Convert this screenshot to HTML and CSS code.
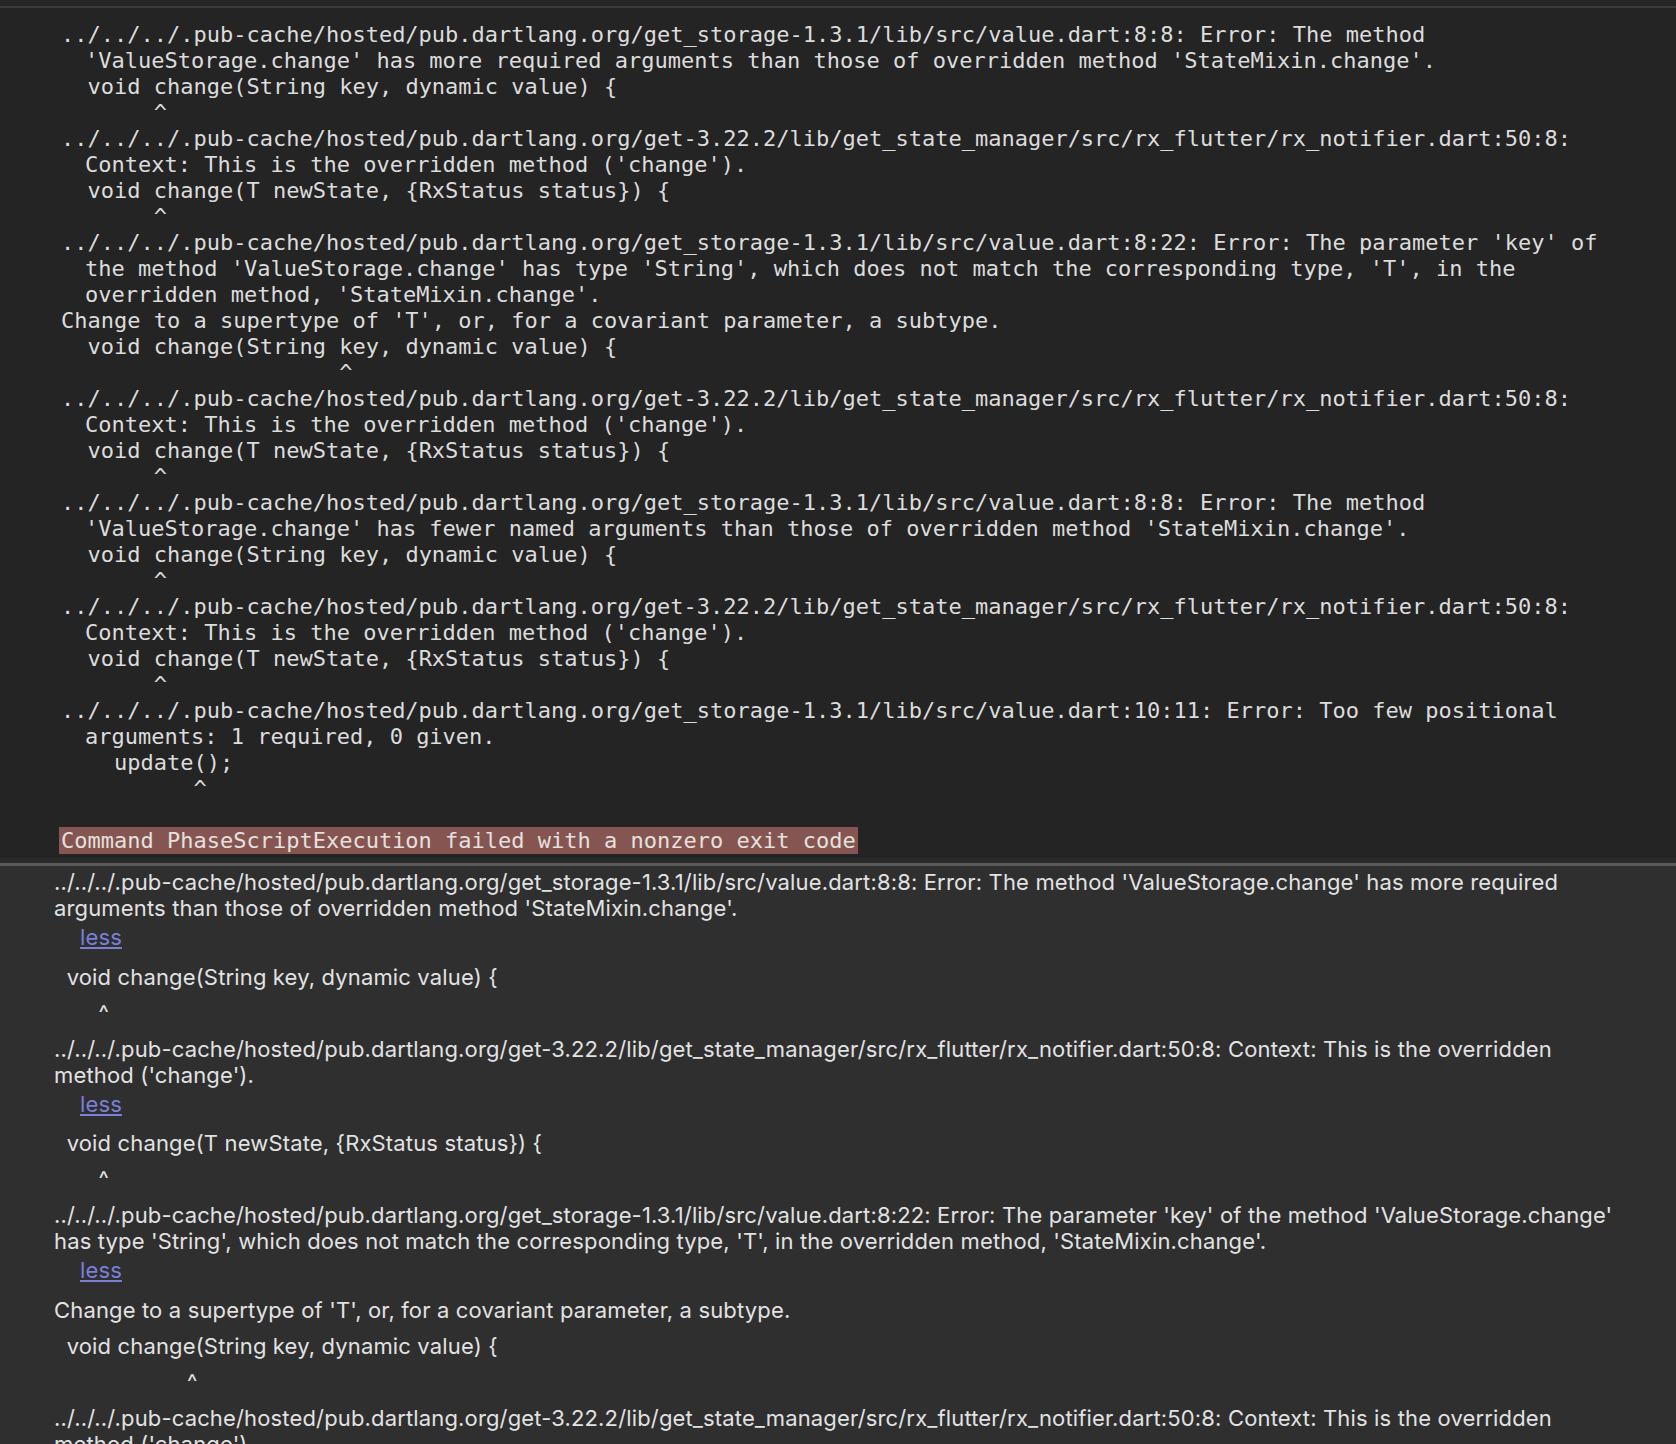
FILE: index.html
```html
<!DOCTYPE html>
<html lang="en">
<head>
<meta charset="utf-8">
<title>Build log</title>
<link rel="stylesheet" href="styles.css">
</head>
<body>
<div class="topstrip"></div>
<section class="log">
<div class="ln">../../../.pub-cache/hosted/pub.dartlang.org/get_storage-1.3.1/lib/src/value.dart:8:8: Error: The method 'ValueStorage.change' has more required arguments than those of overridden method 'StateMixin.change'.</div>
<div class="ln">  void change(String key, dynamic value) {</div>
<div class="ln">       ^</div>
<div class="ln">../../../.pub-cache/hosted/pub.dartlang.org/get-3.22.2/lib/get_state_manager/src/rx_flutter/rx_notifier.dart:50:8: Context: This is the overridden method ('change').</div>
<div class="ln">  void change(T newState, {RxStatus status}) {</div>
<div class="ln">       ^</div>
<div class="ln">../../../.pub-cache/hosted/pub.dartlang.org/get_storage-1.3.1/lib/src/value.dart:8:22: Error: The parameter 'key' of the method 'ValueStorage.change' has type 'String', which does not match the corresponding type, 'T', in the overridden method, 'StateMixin.change'.</div>
<div class="ln">Change to a supertype of 'T', or, for a covariant parameter, a subtype.</div>
<div class="ln">  void change(String key, dynamic value) {</div>
<div class="ln">                     ^</div>
<div class="ln">../../../.pub-cache/hosted/pub.dartlang.org/get-3.22.2/lib/get_state_manager/src/rx_flutter/rx_notifier.dart:50:8: Context: This is the overridden method ('change').</div>
<div class="ln">  void change(T newState, {RxStatus status}) {</div>
<div class="ln">       ^</div>
<div class="ln">../../../.pub-cache/hosted/pub.dartlang.org/get_storage-1.3.1/lib/src/value.dart:8:8: Error: The method 'ValueStorage.change' has fewer named arguments than those of overridden method 'StateMixin.change'.</div>
<div class="ln">  void change(String key, dynamic value) {</div>
<div class="ln">       ^</div>
<div class="ln">../../../.pub-cache/hosted/pub.dartlang.org/get-3.22.2/lib/get_state_manager/src/rx_flutter/rx_notifier.dart:50:8: Context: This is the overridden method ('change').</div>
<div class="ln">  void change(T newState, {RxStatus status}) {</div>
<div class="ln">       ^</div>
<div class="ln">../../../.pub-cache/hosted/pub.dartlang.org/get_storage-1.3.1/lib/src/value.dart:10:11: Error: Too few positional arguments: 1 required, 0 given.</div>
<div class="ln">    update();</div>
<div class="ln">          ^</div>
<div class="ln"> </div>
<div class="ln"><span class="fail">Command PhaseScriptExecution failed with a nonzero exit code</span></div>
</section>
<div class="divider"></div>
<section class="issues">
<div class="issue">
<p class="msg">../../../.pub-cache/hosted/pub.dartlang.org/get_storage-1.3.1/lib/src/value.dart:8:8: Error: The method 'ValueStorage.change' has more required arguments than those of overridden method 'StateMixin.change'.</p>
<div class="less"><a href="#">less</a></div>
<p class="code">  void change(String key, dynamic value) {</p>
<p class="code">       ^</p>
</div>
<div class="issue">
<p class="msg">../../../.pub-cache/hosted/pub.dartlang.org/get-3.22.2/lib/get_state_manager/src/rx_flutter/rx_notifier.dart:50:8: Context: This is the overridden method ('change').</p>
<div class="less"><a href="#">less</a></div>
<p class="code">  void change(T newState, {RxStatus status}) {</p>
<p class="code">       ^</p>
</div>
<div class="issue">
<p class="msg">../../../.pub-cache/hosted/pub.dartlang.org/get_storage-1.3.1/lib/src/value.dart:8:22: Error: The parameter 'key' of the method 'ValueStorage.change' has type 'String', which does not match the corresponding type, 'T', in the overridden method, 'StateMixin.change'.</p>
<div class="less"><a href="#">less</a></div>
<p class="code">Change to a supertype of 'T', or, for a covariant parameter, a subtype.</p>
<p class="code">  void change(String key, dynamic value) {</p>
<p class="code">                     ^</p>
</div>
<div class="issue">
<p class="msg">../../../.pub-cache/hosted/pub.dartlang.org/get-3.22.2/lib/get_state_manager/src/rx_flutter/rx_notifier.dart:50:8: Context: This is the overridden method ('change').</p>
<div class="less"><a href="#">less</a></div>
<p class="code">  void change(T newState, {RxStatus status}) {</p>
<p class="code">       ^</p>
</div>
</section>
</body>
</html>
```
FILE: styles.css
```css
* { box-sizing: border-box; }
html, body { margin: 0; padding: 0; background: #242424; }
body { width: 1676px; height: 1444px; overflow: hidden; }

.topstrip { height: 8px; background: #262626; border-bottom: 2px solid #3b3b3b; }

.log {
  font-family: "DejaVu Sans Mono", "Liberation Mono", monospace;
  font-size: 22px;
  line-height: 26px;
  color: #dcdcdc;
  padding: 13.5px 58px 0 61px;
  height: 850px;
}
.ln { white-space: pre-wrap; padding-left: 24px; text-indent: -24px; min-height: 26px; }
.fail { background: #855551; padding: 1px 2px; margin-left: -2px; color: #e6e0df; }

.divider { height: 8px; background: #5a5a5a; border-top: 5px solid #2a2a2a; }

.issues {
  background: #2f2f2f;
  padding: 3px 56px 0 54px;
  font-family: Inter, "Noto Sans", sans-serif;
  font-size: 22px;
  letter-spacing: 0.15px;
  line-height: 26px;
  color: #e2e2e2;
  height: 600px;
}
.issues p { margin: 10px 0 0; white-space: pre-wrap; }
.issue:first-child .msg { margin-top: 0; }
.less { margin: 3px 0 13.5px 26px; }
.less a { color: #7b7fd6; text-decoration: underline; }
```
